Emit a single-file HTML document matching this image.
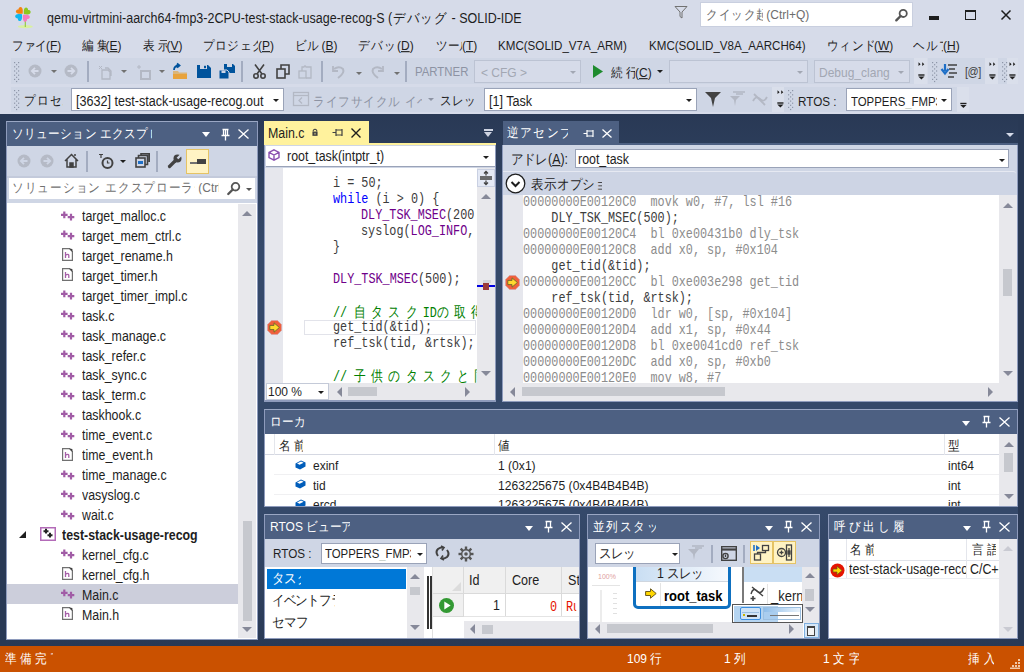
<!DOCTYPE html>
<html><head><meta charset="utf-8">
<style>
*{margin:0;padding:0;box-sizing:border-box}
html,body{width:1024px;height:672px;overflow:hidden}
body{position:relative;background:#293955;font-family:"Liberation Sans",sans-serif;font-size:12px;color:#1e1e1e}
.a{position:absolute}
.t{position:absolute;white-space:nowrap;line-height:1;transform:scaleY(1.12);transform-origin:0 84.65%}
.tw{color:#fff;font-size:12px}
.ts{color:#fff;font-size:12px}
.j{display:inline-block;overflow:hidden;vertical-align:top;white-space:nowrap}
.jc{font-family:"Liberation Sans",sans-serif;letter-spacing:6.75px}
.code{font-family:"Liberation Mono",monospace;font-size:15px;color:#3c3c3c;transform:scaleX(0.7867);transform-origin:0 0}
svg{position:absolute;overflow:visible}
.tri{position:absolute;width:0;height:0;border-left:3px solid transparent;border-right:3px solid transparent;border-top:3px solid #1e1e1e}
.dd{position:absolute;width:0;height:0;border-left:4.5px solid transparent;border-right:4.5px solid transparent;border-top:5px solid #fff}
.sep{position:absolute;width:1.6px;background:#a3acc0}
.combo{position:absolute;background:#fff;border:1px solid #9aa3b8}
.combo.dis{background:#d6dbe9;border-color:#bcc3d3}
.grip{position:absolute;width:6px;background-image:radial-gradient(circle,#a4abbb 0.8px,transparent 1px);background-size:3px 3px}
.ovf{position:absolute;width:8px;height:18px}
.ovf:before{content:"";position:absolute;left:0;top:0;width:0;height:0;border-top:2.5px solid transparent;border-bottom:2.5px solid transparent;border-left:2.5px solid #1e1e1e;box-shadow:none}
.ovf:after{content:"";position:absolute;left:0;top:11px;width:8px;height:2px;background:#1e1e1e}
.ovf2{position:absolute;width:8px;height:2px;background:#1e1e1e}
</style></head><body>
<div class="a" style="left:6px;top:114px;width:1012px;height:532px;background:linear-gradient(180deg,#293955 0%,#35496a 25%,#35496a 75%,#293955 100%)"></div>
<!-- TITLE + MENU + TOOLBARS BACKGROUND -->
<div class="a" style="left:0;top:0;width:1024px;height:114px;background:#d6dbe9"></div>

<!-- title bar -->
<svg style="left:12px;top:4px" width="26" height="28" viewBox="0 0 26 28">
  <ellipse cx="13.3" cy="22.6" rx="7.5" ry="1.7" fill="#d9f0a0"/>
  <rect x="12.7" y="15" width="1.3" height="8" fill="#9ccc50"/>
  <path d="M0 3.8 C-1 2.8 -3.8 0.9 -3.8 -1.2 C-3.8 -3.1 -1.5 -3.8 0 -2.1 C1.5 -3.8 3.8 -3.1 3.8 -1.2 C3.8 0.9 1 2.8 0 3.8Z" fill="#f5820f" transform="translate(8 7) rotate(-45)"/>
  <path d="M0 3.8 C-1 2.8 -3.8 0.9 -3.8 -1.2 C-3.8 -3.1 -1.5 -3.8 0 -2.1 C1.5 -3.8 3.8 -3.1 3.8 -1.2 C3.8 0.9 1 2.8 0 3.8Z" fill="#8cc81e" transform="translate(14.6 7.6) rotate(45)"/>
  <path d="M0 3.8 C-1 2.8 -3.8 0.9 -3.8 -1.2 C-3.8 -3.1 -1.5 -3.8 0 -2.1 C1.5 -3.8 3.8 -3.1 3.8 -1.2 C3.8 0.9 1 2.8 0 3.8Z" fill="#10b8f0" transform="translate(7.3 12.9) rotate(-135)"/>
  <path d="M0 3.8 C-1 2.8 -3.8 0.9 -3.8 -1.2 C-3.8 -3.1 -1.5 -3.8 0 -2.1 C1.5 -3.8 3.8 -3.1 3.8 -1.2 C3.8 0.9 1 2.8 0 3.8Z" fill="#f57ac0" transform="translate(13.7 13.6) rotate(135)"/>
</svg>
<div class="t" style="left:47px;top:13px;font-size:12.5px;color:#1e1e1e">qemu-virtmini-aarch64-fmp3-2CPU-test-stack-usage-recog-S <span class="j" style="width:60.0px;letter-spacing:0.69px">(デバッグ中)</span> - SOLID-IDE</div>
<svg style="left:674px;top:5px" width="14" height="14" viewBox="0 0 14 14"><path d="M1 1.5 H13 L8 7 V13 L6 11.5 V7Z" fill="none" stroke="#717171" stroke-width="1"/></svg>
<div class="a" style="left:700px;top:2px;width:213px;height:25px;background:#fff;border:1px solid #c9cfdf"></div>
<div class="t" style="left:706px;top:9px;font-size:12px;color:#6d6d6d"><span class="j" style="width:57.0px;letter-spacing:0.50px">クイック起動</span> (Ctrl+Q)</div>
<svg style="left:895px;top:8px" width="14" height="14" viewBox="0 0 14 14"><circle cx="8.2" cy="5.4" r="3.6" fill="none" stroke="#555" stroke-width="1.8"/><path d="M5.6 8 L1.3 12.3" stroke="#555" stroke-width="2.4" stroke-linecap="round"/></svg>
<div class="a" style="left:929px;top:16px;width:9.5px;height:3.5px;background:#1e1e1e"></div>
<div class="a" style="left:965px;top:10px;width:10.5px;height:10px;border:1.4px solid #1e1e1e;border-top-width:2.8px"></div>
<svg style="left:1001px;top:9.5px" width="10" height="10" viewBox="0 0 10 10"><path d="M0.5 0.5 L9.5 9.5 M9.5 0.5 L0.5 9.5" stroke="#1e1e1e" stroke-width="1.5"/></svg>

<!-- menu -->
<div class="t" style="left:12px;top:40px"><span class="j" style="width:34.0px;letter-spacing:-0.50px">ファイル</span>(<u>F</u>)</div>
<div class="t" style="left:82px;top:40px"><span class="j" style="width:23.5px;letter-spacing:2.75px">編集</span>(<u>E</u>)</div>
<div class="t" style="left:143px;top:40px"><span class="j" style="width:23.5px;letter-spacing:2.75px">表示</span>(<u>V</u>)</div>
<div class="t" style="left:203px;top:40px"><span class="j" style="width:55.0px;letter-spacing:0.17px">プロジェクト</span>(<u>P</u>)</div>
<div class="t" style="left:295px;top:40px"><span class="j" style="width:26.5px;letter-spacing:-0.17px">ビルド</span>(<u>B</u>)</div>
<div class="t" style="left:358px;top:40px"><span class="j" style="width:39.0px;letter-spacing:0.75px">デバッグ</span>(<u>D</u>)</div>
<div class="t" style="left:436px;top:40px"><span class="j" style="width:26.0px;letter-spacing:-0.33px">ツール</span>(<u>T</u>)</div>
<div class="t" style="left:498px;top:40px;font-size:11.6px">KMC(SOLID_V7A_ARM)</div>
<div class="t" style="left:649px;top:40px;font-size:11.6px">KMC(SOLID_V8A_AARCH64)</div>
<div class="t" style="left:827px;top:40px"><span class="j" style="width:47.0px;letter-spacing:0.40px">ウィンドウ</span>(<u>W</u>)</div>
<div class="t" style="left:913px;top:40px"><span class="j" style="width:30.0px;letter-spacing:1.00px">ヘルプ</span>(<u>H</u>)</div>

<!-- TOOLBAR ROW 1 -->
<div class="a" style="left:11px;top:58px;width:903px;height:26px;background:#cfd6e5"></div>
<div class="a" style="left:914px;top:58px;width:13px;height:26px;background:#dadfeb"></div>
<div class="a" style="left:928px;top:58px;width:57px;height:26px;background:#cfd6e5"></div>
<div class="a" style="left:985px;top:58px;width:13px;height:26px;background:#dadfeb"></div>
<div class="a" style="left:998px;top:58px;width:9px;height:26px;background:#cfd6e5"></div>
<div class="a" style="left:1007px;top:58px;width:11px;height:26px;background:#dadfeb"></div>
<svg style="left:13px;top:62px" width="7" height="19" viewBox="0 0 7 19" fill="#8e96a8"><rect x="1" y="0" width="1.2" height="1.2"/><rect x="5" y="0" width="1.2" height="1.2"/><rect x="3" y="2.1" width="1.2" height="1.2"/><rect x="1" y="4.2" width="1.2" height="1.2"/><rect x="5" y="4.2" width="1.2" height="1.2"/><rect x="3" y="6.300000000000001" width="1.2" height="1.2"/><rect x="1" y="8.4" width="1.2" height="1.2"/><rect x="5" y="8.4" width="1.2" height="1.2"/><rect x="3" y="10.5" width="1.2" height="1.2"/><rect x="1" y="12.6" width="1.2" height="1.2"/><rect x="5" y="12.6" width="1.2" height="1.2"/><rect x="3" y="14.7" width="1.2" height="1.2"/><rect x="1" y="16.8" width="1.2" height="1.2"/><rect x="5" y="16.8" width="1.2" height="1.2"/><rect x="3" y="18.900000000000002" width="1.2" height="1.2"/></svg>
<svg style="left:28px;top:64px" width="14" height="14" viewBox="0 0 14 14"><circle cx="7" cy="7" r="6.5" fill="#b5bac6"/><path d="M3.5 7 H10.5 M7 3.8 L3.8 7 L7 10.2" stroke="#d6dbe9" stroke-width="1.8" fill="none"/></svg>
<div class="tri" style="left:51px;top:70px;border-top-color:#717171"></div>
<svg style="left:64px;top:64px" width="14" height="14" viewBox="0 0 14 14"><circle cx="7" cy="7" r="6.5" fill="#b5bac6"/><path d="M3.5 7 H10.5 M7 3.8 L10.2 7 L7 10.2" stroke="#d6dbe9" stroke-width="1.8" fill="none"/></svg>
<div class="sep" style="left:87px;top:61px;height:21px"></div>
<svg style="left:98px;top:65px" width="15" height="15" viewBox="0 0 15 15" fill="none" stroke="#b3b8c4" stroke-width="1.3"><path d="M4 5 V14 H12 V7 L10 5Z M7 3 H10 L13 6 V11"/><path d="M1 1 L4 4 M4 1 L1 4" stroke-width="1"/></svg>
<div class="tri" style="left:121px;top:70px;border-top-color:#717171"></div>
<svg style="left:136px;top:65px" width="16" height="15" viewBox="0 0 16 15" fill="none" stroke="#b3b8c4" stroke-width="2"><rect x="5" y="6" width="9" height="8"/><path d="M1 2 H5 M3 0 V4" stroke-width="1"/></svg>
<div class="tri" style="left:159px;top:70px;border-top-color:#717171"></div>
<svg style="left:172px;top:63px" width="16" height="17" viewBox="0 0 16 17"><path d="M1 8 H6 L7 9.5 H15 V16 H1Z" fill="#dcb67a"/><path d="M1 11 H15 V16 H1Z" fill="#e8a33d"/><path d="M2 7 Q2 2.5 7 2.5 M5 0.5 L7.5 2.5 L5 4.5" stroke="#00539c" stroke-width="1.8" fill="none"/></svg>
<svg style="left:197px;top:65px" width="14" height="13" viewBox="0 0 14 13"><path d="M0 0 H11 L14 3 V13 H0Z" fill="#00539c"/><rect x="3" y="0" width="7" height="4" fill="#cfd6e5"/><rect x="7" y="0.8" width="2" height="2.4" fill="#00539c"/></svg>
<svg style="left:219px;top:64px" width="16" height="15" viewBox="0 0 16 15"><path d="M5 0 H14 L16 2 V9 H5Z" fill="#00539c"/><rect x="8" y="0" width="5" height="3" fill="#cfd6e5"/><path d="M0 6 H8 L10 8 V15 H0Z" fill="#00539c" stroke="#cfd6e5" stroke-width="1"/><rect x="2.5" y="6.5" width="4" height="2.5" fill="#cfd6e5"/></svg>
<div class="sep" style="left:241px;top:61px;height:21px"></div>
<svg style="left:253px;top:64px" width="13" height="15" viewBox="0 0 13 15" fill="none" stroke="#424242" stroke-width="1.6"><path d="M2 0.5 L9 10 M11 0.5 L4 10"/><circle cx="3" cy="12" r="2.2"/><circle cx="10" cy="12" r="2.2"/></svg>
<svg style="left:276px;top:64px" width="14" height="15" viewBox="0 0 14 15" fill="none" stroke="#424242" stroke-width="1.6"><rect x="1" y="5" width="8" height="9"/><path d="M5 5 V1 H13 V10 H9"/></svg>
<svg style="left:298px;top:64px" width="14" height="15" viewBox="0 0 14 15" fill="none" stroke="#b3b8c4" stroke-width="1.3"><rect x="1" y="7" width="7" height="7"/><path d="M4 7 V3 H6 Q7 0.8 8 3 H10 L13 3 V14 H8"/></svg>
<div class="sep" style="left:321px;top:61px;height:21px"></div>
<svg style="left:332px;top:65px" width="14" height="14" viewBox="0 0 14 14" fill="none" stroke="#b3b8c4" stroke-width="2"><path d="M2 4 Q7 0.5 11 4 Q13 8 6 13"/><path d="M1 1 V6 H6" stroke-width="1.8"/></svg>
<div class="tri" style="left:356px;top:72px;border-top-color:#717171"></div>
<svg style="left:370px;top:65px" width="14" height="14" viewBox="0 0 14 14" fill="none" stroke="#b3b8c4" stroke-width="2"><path d="M12 4 Q7 0.5 3 4 Q1 8 8 13"/><path d="M13 1 V6 H8" stroke-width="1.8"/></svg>
<div class="tri" style="left:394px;top:72px;border-top-color:#717171"></div>
<div class="sep" style="left:405px;top:61px;height:21px"></div>
<div class="t" style="left:415px;top:67px;color:#8d93a3;font-size:11.4px">PARTNER</div>
<div class="combo dis" style="left:474px;top:60px;width:107px;height:23px"></div>
<div class="t" style="left:481px;top:67px;color:#a2a7b3">&lt; CFG &gt;</div>
<div class="tri" style="left:570px;top:71px;border-top-color:#a2a7b3"></div>
<svg style="left:593px;top:65px" width="10" height="13" viewBox="0 0 10 13"><path d="M0 0 L10 6.5 L0 13Z" fill="#1e8b2e"/></svg>
<div class="t" style="left:611px;top:67px"><span class="j" style="width:24.0px;letter-spacing:3.00px">続行</span>(<u>C</u>)</div>
<div class="tri" style="left:657px;top:70px;border-top-color:#1e1e1e"></div>
<div class="combo dis" style="left:669px;top:60px;width:139px;height:23px"></div>
<div class="tri" style="left:797px;top:71px;border-top-color:#a2a7b3"></div>
<div class="combo dis" style="left:814px;top:60px;width:96px;height:23px"></div>
<div class="t" style="left:819px;top:67px;color:#a2a7b3">Debug_clang</div>
<div class="tri" style="left:898px;top:71px;border-top-color:#a2a7b3"></div>
<svg style="left:918px;top:62px" width="8" height="18" viewBox="0 0 8 18"><path d="M0.5 0.3 L2.6 2.2 L0.5 4.1Z M4.2 0.3 L6.3 2.2 L4.2 4.1Z" fill="#1e1e1e"/><rect x="0.3" y="12.3" width="6.2" height="1.4" fill="#1e1e1e"/><path d="M0.3 14.6 H6.5 L3.4 17.6Z" fill="#1e1e1e"/></svg>
<svg style="left:931px;top:62px" width="7" height="19" viewBox="0 0 7 19" fill="#8e96a8"><rect x="1" y="0" width="1.2" height="1.2"/><rect x="5" y="0" width="1.2" height="1.2"/><rect x="3" y="2.1" width="1.2" height="1.2"/><rect x="1" y="4.2" width="1.2" height="1.2"/><rect x="5" y="4.2" width="1.2" height="1.2"/><rect x="3" y="6.300000000000001" width="1.2" height="1.2"/><rect x="1" y="8.4" width="1.2" height="1.2"/><rect x="5" y="8.4" width="1.2" height="1.2"/><rect x="3" y="10.5" width="1.2" height="1.2"/><rect x="1" y="12.6" width="1.2" height="1.2"/><rect x="5" y="12.6" width="1.2" height="1.2"/><rect x="3" y="14.7" width="1.2" height="1.2"/><rect x="1" y="16.8" width="1.2" height="1.2"/><rect x="5" y="16.8" width="1.2" height="1.2"/><rect x="3" y="18.900000000000002" width="1.2" height="1.2"/></svg>
<svg style="left:941px;top:64px" width="17" height="14" viewBox="0 0 17 14"><path d="M7 1 H16 M8 5 H14 M8 9 H16 M7 13 H13" stroke="#424242" stroke-width="1.6"/><path d="M4 0 V7 M0.5 5 L4 9.5 L7.5 5" stroke="#1e6fc7" stroke-width="2.2" fill="none"/></svg>
<div class="t" style="left:965px;top:67px;font-size:11px;color:#424242;letter-spacing:-0.5px">[@]</div>
<svg style="left:989px;top:62px" width="8" height="18" viewBox="0 0 8 18"><path d="M0.5 0.3 L2.6 2.2 L0.5 4.1Z M4.2 0.3 L6.3 2.2 L4.2 4.1Z" fill="#1e1e1e"/><rect x="0.3" y="12.3" width="6.2" height="1.4" fill="#1e1e1e"/><path d="M0.3 14.6 H6.5 L3.4 17.6Z" fill="#1e1e1e"/></svg>
<svg style="left:1001px;top:62px" width="7" height="19" viewBox="0 0 7 19" fill="#8e96a8"><rect x="1" y="0" width="1.2" height="1.2"/><rect x="5" y="0" width="1.2" height="1.2"/><rect x="3" y="2.1" width="1.2" height="1.2"/><rect x="1" y="4.2" width="1.2" height="1.2"/><rect x="5" y="4.2" width="1.2" height="1.2"/><rect x="3" y="6.300000000000001" width="1.2" height="1.2"/><rect x="1" y="8.4" width="1.2" height="1.2"/><rect x="5" y="8.4" width="1.2" height="1.2"/><rect x="3" y="10.5" width="1.2" height="1.2"/><rect x="1" y="12.6" width="1.2" height="1.2"/><rect x="5" y="12.6" width="1.2" height="1.2"/><rect x="3" y="14.7" width="1.2" height="1.2"/><rect x="1" y="16.8" width="1.2" height="1.2"/><rect x="5" y="16.8" width="1.2" height="1.2"/><rect x="3" y="18.900000000000002" width="1.2" height="1.2"/></svg>
<svg style="left:1009px;top:62px" width="8" height="18" viewBox="0 0 8 18"><path d="M0.5 0.3 L2.6 2.2 L0.5 4.1Z M4.2 0.3 L6.3 2.2 L4.2 4.1Z" fill="#1e1e1e"/><rect x="0.3" y="12.3" width="6.2" height="1.4" fill="#1e1e1e"/><path d="M0.3 14.6 H6.5 L3.4 17.6Z" fill="#1e1e1e"/></svg>

<!-- TOOLBAR ROW 2 -->
<div class="a" style="left:11px;top:87px;width:761px;height:25px;background:#cfd6e5"></div>
<div class="a" style="left:772px;top:87px;width:12px;height:25px;background:#dadfeb"></div>
<div class="a" style="left:784px;top:87px;width:173px;height:25px;background:#cfd6e5"></div>
<div class="a" style="left:957px;top:87px;width:12px;height:25px;background:#dadfeb"></div>
<svg style="left:13px;top:90px" width="7" height="19" viewBox="0 0 7 19" fill="#8e96a8"><rect x="1" y="0" width="1.2" height="1.2"/><rect x="5" y="0" width="1.2" height="1.2"/><rect x="3" y="2.1" width="1.2" height="1.2"/><rect x="1" y="4.2" width="1.2" height="1.2"/><rect x="5" y="4.2" width="1.2" height="1.2"/><rect x="3" y="6.300000000000001" width="1.2" height="1.2"/><rect x="1" y="8.4" width="1.2" height="1.2"/><rect x="5" y="8.4" width="1.2" height="1.2"/><rect x="3" y="10.5" width="1.2" height="1.2"/><rect x="1" y="12.6" width="1.2" height="1.2"/><rect x="5" y="12.6" width="1.2" height="1.2"/><rect x="3" y="14.7" width="1.2" height="1.2"/><rect x="1" y="16.8" width="1.2" height="1.2"/><rect x="5" y="16.8" width="1.2" height="1.2"/><rect x="3" y="18.900000000000002" width="1.2" height="1.2"/></svg>
<div class="t" style="left:24px;top:95px"><span class="j" style="width:39.0px;letter-spacing:0.75px">プロセス</span></div>
<div class="combo" style="left:71px;top:88px;width:213px;height:23px"></div>
<div class="t" style="left:76px;top:96px;font-size:12.6px">[3632] test-stack-usage-recog.out</div>
<div class="tri" style="left:273px;top:99px;border-top-color:#1e1e1e"></div>
<svg style="left:293px;top:92px" width="16" height="14" viewBox="0 0 16 14" fill="none" stroke="#b3b8c4" stroke-width="1.3"><rect x="0.5" y="0.5" width="15" height="13"/><path d="M0.5 3.5 H15.5"/><path d="M9 5.5 L6 8.5 L9 11.5" /></svg>
<div class="t" style="left:313px;top:96px;color:#8d93a3"><span class="j" style="width:109.0px;letter-spacing:0.56px">ライフサイクル イベント</span></div>
<div class="tri" style="left:428px;top:98px;border-top-color:#8d93a3"></div>
<div class="t" style="left:440px;top:95px"><span class="j" style="width:36.0px;letter-spacing:0.00px">スレッド</span></div>
<div class="combo" style="left:484px;top:88px;width:213px;height:23px"></div>
<div class="t" style="left:489px;top:96px;font-size:12.6px">[1] Task</div>
<div class="tri" style="left:686px;top:99px;border-top-color:#1e1e1e"></div>
<svg style="left:705px;top:92px" width="16" height="15" viewBox="0 0 16 15"><path d="M0 0 H16 L10 6 L8 15 L6 6Z" fill="#424242"/><path d="M2 1 H14 L9 5" fill="#424242"/></svg>
<svg style="left:728px;top:92px" width="17" height="15" viewBox="0 0 17 15" fill="#b3b8c4"><path d="M2 4 H12 L8 8 L7 14 L6 8Z"/><path d="M5 0 H17 M8 2 H15" stroke="#b3b8c4" stroke-width="1.3"/></svg>
<svg style="left:752px;top:93px" width="16" height="13" viewBox="0 0 16 13" fill="none" stroke="#b3b8c4" stroke-width="1.8"><path d="M1 8 Q4 2 8 6 Q12 10 15 4"/><path d="M2 1 L13 12"/></svg>
<svg style="left:777px;top:90px" width="8" height="18" viewBox="0 0 8 18"><path d="M0.5 0.3 L2.6 2.2 L0.5 4.1Z M4.2 0.3 L6.3 2.2 L4.2 4.1Z" fill="#1e1e1e"/><rect x="0.3" y="12.3" width="6.2" height="1.4" fill="#1e1e1e"/><path d="M0.3 14.6 H6.5 L3.4 17.6Z" fill="#1e1e1e"/></svg>
<svg style="left:787px;top:90px" width="7" height="19" viewBox="0 0 7 19" fill="#8e96a8"><rect x="1" y="0" width="1.2" height="1.2"/><rect x="5" y="0" width="1.2" height="1.2"/><rect x="3" y="2.1" width="1.2" height="1.2"/><rect x="1" y="4.2" width="1.2" height="1.2"/><rect x="5" y="4.2" width="1.2" height="1.2"/><rect x="3" y="6.300000000000001" width="1.2" height="1.2"/><rect x="1" y="8.4" width="1.2" height="1.2"/><rect x="5" y="8.4" width="1.2" height="1.2"/><rect x="3" y="10.5" width="1.2" height="1.2"/><rect x="1" y="12.6" width="1.2" height="1.2"/><rect x="5" y="12.6" width="1.2" height="1.2"/><rect x="3" y="14.7" width="1.2" height="1.2"/><rect x="1" y="16.8" width="1.2" height="1.2"/><rect x="5" y="16.8" width="1.2" height="1.2"/><rect x="3" y="18.900000000000002" width="1.2" height="1.2"/></svg>
<div class="t" style="left:798px;top:96px;font-size:11.7px">RTOS :</div>
<div class="combo" style="left:846px;top:88px;width:106px;height:23px"></div>
<div class="t" style="left:851px;top:96.5px;font-size:11.4px;width:85.5px;overflow:hidden">TOPPERS_FMP3</div>
<div class="tri" style="left:941px;top:99px;border-top-color:#1e1e1e"></div>
<svg style="left:960px;top:90px" width="8" height="18" viewBox="0 0 8 18"><rect x="0.3" y="12.8" width="6.2" height="1.4" fill="#1e1e1e"/><path d="M0.3 15.1 H6.5 L3.4 18.1Z" fill="#1e1e1e"/></svg>

<!-- ========== SOLUTION EXPLORER ========== -->
<div class="a" style="left:6px;top:121px;width:252px;height:519px;background:#fff;border:1px solid #8e9bbc;border-top-color:#9aa7c4"></div>
<div class="a" style="left:7px;top:122px;width:250px;height:24px;background:#4d6082"></div>
<div class="t tw" style="left:12px;top:128px"><span class="j" style="width:140.0px;letter-spacing:0.10px">ソリューション エクスプローラー</span></div>
<div class="dd" style="left:202px;top:132px"></div>
<svg class="pin" style="left:221px;top:129px" width="9" height="12" viewBox="0 0 9 12"><path d="M1.5 0.5 H7.5 M2.5 0.5 V6.5 M6.5 0.5 V6.5 M0.5 6.5 H8.5 M4.5 6.5 V11.5 M4.5 0.5 V6.5" stroke="#fff" stroke-width="1.3" fill="none"/></svg>
<svg style="left:238px;top:129px" width="11" height="10" viewBox="0 0 11 10"><path d="M0.5 0.5 L10.5 9.5 M10.5 0.5 L0.5 9.5" stroke="#fff" stroke-width="1.3"/></svg>
<div class="a" style="left:7px;top:146px;width:250px;height:31px;background:#cfd6e5"></div>
<svg style="left:17px;top:154px" width="14" height="14" viewBox="0 0 14 14"><circle cx="7" cy="7" r="6.5" fill="#b5bac6"/><path d="M3.5 7 H10.5 M7 3.8 L3.8 7 L7 10.2" stroke="#cfd6e5" stroke-width="1.8" fill="none"/></svg>
<svg style="left:40px;top:154px" width="14" height="14" viewBox="0 0 14 14"><circle cx="7" cy="7" r="6.5" fill="#b5bac6"/><path d="M3.5 7 H10.5 M7 3.8 L10.2 7 L7 10.2" stroke="#cfd6e5" stroke-width="1.8" fill="none"/></svg>
<svg style="left:64px;top:153px" width="15" height="15" viewBox="0 0 15 15" fill="none" stroke="#424242" stroke-width="1.5"><path d="M1 8 L7.5 1.5 L14 8 M3 6.5 V14 H12 V6.5 M11 3 V1"/><rect x="6" y="10" width="3" height="4" fill="#424242"/></svg>
<div class="sep" style="left:86px;top:151px;height:21px"></div>
<svg style="left:99px;top:154px" width="15" height="15" viewBox="0 0 15 15" fill="none" stroke="#424242"><circle cx="8.5" cy="9" r="5" stroke-width="2"/><path d="M8.5 6.5 V9 H10.5" stroke-width="1.2"/><path d="M0 0.5 H4 M2 0.5 V4" stroke-width="1.2"/></svg>
<div class="tri" style="left:120px;top:160px;border-top-color:#1e1e1e"></div>
<svg style="left:135px;top:153px" width="15" height="15" viewBox="0 0 15 15" fill="none" stroke="#424242" stroke-width="1.6"><rect x="1" y="5" width="9" height="9"/><path d="M3.5 5 V2.5 H12.5 V11.5 H10 M6 2.5 V0.8 H14.2 V9"/><rect x="3" y="8" width="5" height="3" fill="#1e6fc7" stroke="none"/></svg>
<div class="sep" style="left:156px;top:151px;height:21px"></div>
<svg style="left:168px;top:154px" width="14" height="14" viewBox="0 0 14 14"><path d="M1.5 12.5 L7 7" stroke="#424242" stroke-width="3.2" stroke-linecap="round"/><circle cx="9.5" cy="4.5" r="4" fill="#424242"/><path d="M9.5 4.5 L13 1" stroke="#cfd6e5" stroke-width="2.4"/></svg>
<div class="a" style="left:186px;top:149px;width:23px;height:25px;background:#fff3c4;border:1px solid #e5c365"></div>
<div class="a" style="left:190px;top:162px;width:8px;height:2px;background:#717171"></div>
<div class="a" style="left:197px;top:159px;width:9px;height:5px;background:#424242"></div>
<div class="a" style="left:7px;top:176px;width:250px;height:27px;background:#cfd6e5"></div>
<div class="a" style="left:7px;top:176px;width:250px;height:2px;background:#c3cadb"></div>
<div class="a" style="left:9px;top:178px;width:246px;height:21px;background:#fff"></div>
<div class="t" style="left:12px;top:182px;color:#717171;width:207px;overflow:hidden"><span class="j" style="width:183.0px;letter-spacing:0.72px">ソリューション エクスプローラー の検索</span> (Ctrl+;)</div>
<svg style="left:227px;top:182px" width="14" height="14" viewBox="0 0 14 14"><circle cx="8.5" cy="4.7" r="3.8" fill="none" stroke="#555" stroke-width="1.8"/><path d="M5.8 7.5 L1.3 12" stroke="#555" stroke-width="2.4" stroke-linecap="round"/></svg>
<div class="tri" style="left:246px;top:187.5px;border-top-color:#555"></div>
<svg style="left:61px;top:210.5px" width="14" height="10" viewBox="0 0 14 10"><path d="M0 3.9 H6.6 M3.3 0.6 V7.2 M6.7 6.1 H13.3 M10 2.8 V9.4" stroke="#a15ca6" stroke-width="2.2"/></svg>
<div class="t" style="left:82px;top:211.0px;font-size:12.4px">target_malloc.c</div>
<svg style="left:61px;top:230.4px" width="14" height="10" viewBox="0 0 14 10"><path d="M0 3.9 H6.6 M3.3 0.6 V7.2 M6.7 6.1 H13.3 M10 2.8 V9.4" stroke="#a15ca6" stroke-width="2.2"/></svg>
<div class="t" style="left:82px;top:230.9px;font-size:12.4px">target_mem_ctrl.c</div>
<svg style="left:62px;top:248.4px" width="11" height="13" viewBox="0 0 11 13"><path d="M0.6 0.6 H7.5 L10.4 3.5 V12.4 H0.6Z" fill="#fff" stroke="#717171" stroke-width="1.2"/><path d="M7 0.6 L10.4 4 V1 Z" fill="#424242"/><path d="M3.5 4 V10 M3.5 7.2 Q6.8 5.5 6.8 7.5 V10" stroke="#a65fa8" stroke-width="1.3" fill="none"/></svg>
<div class="t" style="left:82px;top:250.9px;font-size:12.4px">target_rename.h</div>
<svg style="left:62px;top:268.3px" width="11" height="13" viewBox="0 0 11 13"><path d="M0.6 0.6 H7.5 L10.4 3.5 V12.4 H0.6Z" fill="#fff" stroke="#717171" stroke-width="1.2"/><path d="M7 0.6 L10.4 4 V1 Z" fill="#424242"/><path d="M3.5 4 V10 M3.5 7.2 Q6.8 5.5 6.8 7.5 V10" stroke="#a65fa8" stroke-width="1.3" fill="none"/></svg>
<div class="t" style="left:82px;top:270.8px;font-size:12.4px">target_timer.h</div>
<svg style="left:61px;top:290.2px" width="14" height="10" viewBox="0 0 14 10"><path d="M0 3.9 H6.6 M3.3 0.6 V7.2 M6.7 6.1 H13.3 M10 2.8 V9.4" stroke="#a15ca6" stroke-width="2.2"/></svg>
<div class="t" style="left:82px;top:290.7px;font-size:12.4px">target_timer_impl.c</div>
<svg style="left:61px;top:310.1px" width="14" height="10" viewBox="0 0 14 10"><path d="M0 3.9 H6.6 M3.3 0.6 V7.2 M6.7 6.1 H13.3 M10 2.8 V9.4" stroke="#a15ca6" stroke-width="2.2"/></svg>
<div class="t" style="left:82px;top:310.6px;font-size:12.4px">task.c</div>
<svg style="left:61px;top:330.1px" width="14" height="10" viewBox="0 0 14 10"><path d="M0 3.9 H6.6 M3.3 0.6 V7.2 M6.7 6.1 H13.3 M10 2.8 V9.4" stroke="#a15ca6" stroke-width="2.2"/></svg>
<div class="t" style="left:82px;top:330.6px;font-size:12.4px">task_manage.c</div>
<svg style="left:61px;top:350.0px" width="14" height="10" viewBox="0 0 14 10"><path d="M0 3.9 H6.6 M3.3 0.6 V7.2 M6.7 6.1 H13.3 M10 2.8 V9.4" stroke="#a15ca6" stroke-width="2.2"/></svg>
<div class="t" style="left:82px;top:350.5px;font-size:12.4px">task_refer.c</div>
<svg style="left:61px;top:369.9px" width="14" height="10" viewBox="0 0 14 10"><path d="M0 3.9 H6.6 M3.3 0.6 V7.2 M6.7 6.1 H13.3 M10 2.8 V9.4" stroke="#a15ca6" stroke-width="2.2"/></svg>
<div class="t" style="left:82px;top:370.4px;font-size:12.4px">task_sync.c</div>
<svg style="left:61px;top:389.9px" width="14" height="10" viewBox="0 0 14 10"><path d="M0 3.9 H6.6 M3.3 0.6 V7.2 M6.7 6.1 H13.3 M10 2.8 V9.4" stroke="#a15ca6" stroke-width="2.2"/></svg>
<div class="t" style="left:82px;top:390.4px;font-size:12.4px">task_term.c</div>
<svg style="left:61px;top:409.8px" width="14" height="10" viewBox="0 0 14 10"><path d="M0 3.9 H6.6 M3.3 0.6 V7.2 M6.7 6.1 H13.3 M10 2.8 V9.4" stroke="#a15ca6" stroke-width="2.2"/></svg>
<div class="t" style="left:82px;top:410.3px;font-size:12.4px">taskhook.c</div>
<svg style="left:61px;top:429.7px" width="14" height="10" viewBox="0 0 14 10"><path d="M0 3.9 H6.6 M3.3 0.6 V7.2 M6.7 6.1 H13.3 M10 2.8 V9.4" stroke="#a15ca6" stroke-width="2.2"/></svg>
<div class="t" style="left:82px;top:430.2px;font-size:12.4px">time_event.c</div>
<svg style="left:62px;top:447.7px" width="11" height="13" viewBox="0 0 11 13"><path d="M0.6 0.6 H7.5 L10.4 3.5 V12.4 H0.6Z" fill="#fff" stroke="#717171" stroke-width="1.2"/><path d="M7 0.6 L10.4 4 V1 Z" fill="#424242"/><path d="M3.5 4 V10 M3.5 7.2 Q6.8 5.5 6.8 7.5 V10" stroke="#a65fa8" stroke-width="1.3" fill="none"/></svg>
<div class="t" style="left:82px;top:450.2px;font-size:12.4px">time_event.h</div>
<svg style="left:61px;top:469.6px" width="14" height="10" viewBox="0 0 14 10"><path d="M0 3.9 H6.6 M3.3 0.6 V7.2 M6.7 6.1 H13.3 M10 2.8 V9.4" stroke="#a15ca6" stroke-width="2.2"/></svg>
<div class="t" style="left:82px;top:470.1px;font-size:12.4px">time_manage.c</div>
<svg style="left:61px;top:489.5px" width="14" height="10" viewBox="0 0 14 10"><path d="M0 3.9 H6.6 M3.3 0.6 V7.2 M6.7 6.1 H13.3 M10 2.8 V9.4" stroke="#a15ca6" stroke-width="2.2"/></svg>
<div class="t" style="left:82px;top:490.0px;font-size:12.4px">vasyslog.c</div>
<svg style="left:61px;top:509.5px" width="14" height="10" viewBox="0 0 14 10"><path d="M0 3.9 H6.6 M3.3 0.6 V7.2 M6.7 6.1 H13.3 M10 2.8 V9.4" stroke="#a15ca6" stroke-width="2.2"/></svg>
<div class="t" style="left:82px;top:510.0px;font-size:12.4px">wait.c</div>
<div class="a" style="left:19px;top:531.4px;width:0;height:0;border-left:7px solid transparent;border-bottom:7px solid #1e1e1e"></div>
<svg style="left:40px;top:526.9px" width="16" height="14" viewBox="0 0 16 14"><rect x="0.75" y="0.75" width="14.5" height="12.5" fill="#fff" stroke="#b36bb8" stroke-width="1.5"/><path d="M3.5 4.2 H8.5 M6 1.8 V6.6 M7.5 8.2 H12.5 M10 5.8 V10.6" stroke="#222" stroke-width="2"/></svg>
<div class="t" style="left:62px;top:529.9px;font-size:12.4px;font-weight:bold">test-stack-usage-recog</div>
<svg style="left:61px;top:549.3px" width="14" height="10" viewBox="0 0 14 10"><path d="M0 3.9 H6.6 M3.3 0.6 V7.2 M6.7 6.1 H13.3 M10 2.8 V9.4" stroke="#a15ca6" stroke-width="2.2"/></svg>
<div class="t" style="left:82px;top:549.8px;font-size:12.4px">kernel_cfg.c</div>
<svg style="left:62px;top:567.2px" width="11" height="13" viewBox="0 0 11 13"><path d="M0.6 0.6 H7.5 L10.4 3.5 V12.4 H0.6Z" fill="#fff" stroke="#717171" stroke-width="1.2"/><path d="M7 0.6 L10.4 4 V1 Z" fill="#424242"/><path d="M3.5 4 V10 M3.5 7.2 Q6.8 5.5 6.8 7.5 V10" stroke="#a65fa8" stroke-width="1.3" fill="none"/></svg>
<div class="t" style="left:82px;top:569.7px;font-size:12.4px">kernel_cfg.h</div>
<div class="a" style="left:7px;top:583.5px;width:231px;height:20.5px;background:#ccceDB"></div>
<svg style="left:61px;top:589.2px" width="14" height="10" viewBox="0 0 14 10"><path d="M0 3.9 H6.6 M3.3 0.6 V7.2 M6.7 6.1 H13.3 M10 2.8 V9.4" stroke="#a15ca6" stroke-width="2.2"/></svg>
<div class="t" style="left:82px;top:589.7px;font-size:12.4px">Main.c</div>
<svg style="left:62px;top:607.1px" width="11" height="13" viewBox="0 0 11 13"><path d="M0.6 0.6 H7.5 L10.4 3.5 V12.4 H0.6Z" fill="#fff" stroke="#717171" stroke-width="1.2"/><path d="M7 0.6 L10.4 4 V1 Z" fill="#424242"/><path d="M3.5 4 V10 M3.5 7.2 Q6.8 5.5 6.8 7.5 V10" stroke="#a65fa8" stroke-width="1.3" fill="none"/></svg>
<div class="t" style="left:82px;top:609.6px;font-size:12.4px">Main.h</div>
<div class="a" style="left:238px;top:204px;width:18px;height:434px;background:#e8e8ec"></div>
<div class="a" style="left:242px;top:211px;width:0;height:0;border-left:5px solid transparent;border-right:5px solid transparent;border-bottom:5px solid #868999"></div>
<div class="a" style="left:243px;top:521px;width:9px;height:100px;background:#c6c8ce"></div>
<div class="a" style="left:242px;top:627px;width:0;height:0;border-left:5px solid transparent;border-right:5px solid transparent;border-top:5px solid #868999"></div>
<!-- ========== EDITOR ========== -->
<div class="a" style="left:264px;top:121px;width:105px;height:24px;background:#fff29d"></div>
<div class="a" style="left:264px;top:143px;width:232px;height:2px;background:#fff29d"></div>
<div class="t" style="left:268px;top:128px;font-size:12.4px">Main.c</div>
<svg style="left:311.5px;top:128px" width="6" height="8" viewBox="0 0 7 9"><path d="M1.5 4 V2.5 Q3.5 0 5.5 2.5 V4" stroke="#424242" stroke-width="1.2" fill="none"/><rect x="0.5" y="4" width="6" height="5" fill="#424242"/><rect x="3" y="5.5" width="1" height="2" fill="#fff29d"/></svg>
<svg style="left:332px;top:128px" width="11" height="9" viewBox="0 0 11 9" fill="none" stroke="#424242" stroke-width="1.2"><path d="M0.5 4.5 H4 M4 1 V8 M4 2 H10 M4 7 H10 M10 1 V8"/></svg>
<svg style="left:351px;top:128px" width="10" height="10" viewBox="0 0 10 10"><path d="M0.5 0.5 L9.5 9.5 M9.5 0.5 L0.5 9.5" stroke="#1e1e1e" stroke-width="1.4"/></svg>
<div class="a" style="left:484px;top:129px;width:9px;height:2px;background:#ced4e2"></div>
<div class="a" style="left:484px;top:132px;width:0;height:0;border-left:4.5px solid transparent;border-right:4.5px solid transparent;border-top:5px solid #ced4e2"></div>
<div class="a" style="left:264px;top:145px;width:232px;height:257px;background:#cfd6e5;border-left:1px solid #8e9bbc;border-right:1px solid #8e9bbc;border-bottom:2px solid #8e9bbc"></div>
<div class="a" style="left:266px;top:146px;width:229px;height:21px;background:#fff;border-bottom:1px solid #9aa3b8"></div>
<svg style="left:268px;top:149px" width="12" height="12" viewBox="0 0 12 12" fill="none" stroke="#8a4fb0" stroke-width="1.4"><path d="M6 0.8 L11 3.4 V8.6 L6 11.2 L1 8.6 V3.4Z M1 3.4 L6 6 L11 3.4 M6 6 V11.2"/></svg>
<div class="t" style="left:287px;top:151px;font-size:12.4px">root_task(intptr_t)</div>
<div class="tri" style="left:483px;top:156px;border-top-color:#1e1e1e"></div>
<div class="a" style="left:265px;top:168px;width:18px;height:215px;background:#e6e7ed"></div>
<div class="a" style="left:283px;top:168px;width:194px;height:215px;background:#fff;overflow:hidden" id="code"></div>
<div class="a" style="left:304px;top:320px;width:172px;height:15px;border:1px solid #e2e3ea"></div>
<div class="a" style="left:333px;top:175.5px;width:144px;height:16px;overflow:hidden"><div class="t code" style="left:0;top:0">i = 50;</div></div>
<div class="a" style="left:333px;top:191.5px;width:144px;height:16px;overflow:hidden"><div class="t code" style="left:0;top:0"><span style="color:#0000ff">while</span> (i &gt; 0) {</div></div>
<div class="a" style="left:361px;top:207.5px;width:116px;height:16px;overflow:hidden"><div class="t code" style="left:0;top:0"><span style="color:#6f008a">DLY_TSK_MSEC</span>(200</div></div>
<div class="a" style="left:361px;top:223.5px;width:116px;height:16px;overflow:hidden"><div class="t code" style="left:0;top:0">syslog(<span style="color:#6f008a">LOG_INFO</span>,</div></div>
<div class="a" style="left:333px;top:239.5px;width:144px;height:16px;overflow:hidden"><div class="t code" style="left:0;top:0">}</div></div>
<div class="a" style="left:333px;top:271.5px;width:144px;height:16px;overflow:hidden"><div class="t code" style="left:0;top:0"><span style="color:#6f008a">DLY_TSK_MSEC</span>(500);</div></div>
<div class="a" style="left:333px;top:303.5px;width:144px;height:16px;overflow:hidden"><div class="t code" style="left:0;top:0"><span style="color:#008000">// <span class="jc">自タスク</span>ID<span class="jc">の取得と</span></span></div></div>
<div class="a" style="left:333px;top:319.5px;width:144px;height:16px;overflow:hidden"><div class="t code" style="left:0;top:0">get_tid(&amp;tid);</div></div>
<div class="a" style="left:333px;top:335.5px;width:144px;height:16px;overflow:hidden"><div class="t code" style="left:0;top:0">ref_tsk(tid, &amp;rtsk);</div></div>
<div class="a" style="left:333px;top:367.5px;width:144px;height:16px;overflow:hidden"><div class="t code" style="left:0;top:0"><span style="color:#008000">// <span class="jc">子供のタスクと同期</span></span></div></div>
<svg style="left:267px;top:319.5px" width="15" height="15" viewBox="0 0 15 15"><path d="M4.6 0.5 H10.4 L14.5 4.6 V10.4 L10.4 14.5 H4.6 L0.5 10.4 V4.6Z" fill="#f0603c" stroke="#d9a3a3" stroke-width="1"/><path d="M2.8 5.4 H7 V2.8 L12.4 7.5 L7 12.2 V9.6 H2.8Z" fill="#ffd92e" stroke="#6e6a2a" stroke-width="0.9"/></svg>
<div class="a" style="left:477px;top:168px;width:18px;height:232px;background:#e8e8ec"></div>
<div class="a" style="left:477px;top:169px;width:18px;height:18px;background:#e4e9f5;border:1px solid #c9d0e2"></div>
<svg style="left:480px;top:171px" width="12" height="14" viewBox="0 0 12 14" fill="none" stroke="#424242" stroke-width="1.3"><path d="M0 6 H12 M0 8 H12 M6 0.5 V4.5 M6 9.5 V13.5 M4 2.5 L6 0.5 L8 2.5 M4 11.5 L6 13.5 L8 11.5"/></svg>
<div class="a" style="left:481px;top:194px;width:0;height:0;border-left:5px solid transparent;border-right:5px solid transparent;border-bottom:5px solid #868999"></div>
<div class="a" style="left:483px;top:280px;width:8px;height:3px;background:#d4d5da"></div>
<div class="a" style="left:477px;top:285px;width:18px;height:2px;background:#0000e0"></div>
<div class="a" style="left:483px;top:283px;width:6px;height:7px;background:#9b3a3a"></div>
<div class="a" style="left:481px;top:371px;width:0;height:0;border-left:5px solid transparent;border-right:5px solid transparent;border-top:5px solid #868999"></div>
<div class="a" style="left:265px;top:383px;width:230px;height:17px;background:#e8e8ec"></div>
<div class="a" style="left:266px;top:383px;width:63px;height:17px;background:#fff;border:1px solid #c4cad8"></div>
<div class="t" style="left:268px;top:386px;font-size:12px">100 %</div>
<div class="tri" style="left:318px;top:391px;border-top-color:#1e1e1e"></div>
<div class="a" style="left:337px;top:387px;width:0;height:0;border-top:5px solid transparent;border-bottom:5px solid transparent;border-right:5px solid #868999"></div>
<div class="a" style="left:348px;top:387px;width:29px;height:9px;background:#c6c8ce"></div>
<div class="a" style="left:465px;top:387px;width:0;height:0;border-top:5px solid transparent;border-bottom:5px solid transparent;border-left:5px solid #868999"></div>
<!-- ========== DISASSEMBLY ========== -->
<div class="a" style="left:503px;top:121px;width:116px;height:24px;background:#4d6082"></div>
<div class="a" style="left:503px;top:143px;width:515px;height:2px;background:#4d6082"></div>
<div class="t tw" style="left:507px;top:127px"><span class="j" style="width:61.0px;letter-spacing:1.17px">逆アセンブル</span></div>
<svg style="left:583px;top:129px" width="11" height="9" viewBox="0 0 11 9" fill="none" stroke="#fff" stroke-width="1.2"><path d="M0.5 4.5 H4 M4 1 V8 M4 2 H10 M4 7 H10 M10 1 V8"/></svg>
<svg style="left:602px;top:129px" width="10" height="9" viewBox="0 0 10 9"><path d="M0.5 0.5 L9.5 8.5 M9.5 0.5 L0.5 8.5" stroke="#fff" stroke-width="1.3"/></svg>
<div class="a" style="left:1006px;top:132.8px;width:0;height:0;border-left:4.3px solid transparent;border-right:4.3px solid transparent;border-top:4.5px solid #d6dbe9"></div>
<div class="a" style="left:502px;top:145px;width:516px;height:257px;background:#cfd6e5;border-left:1px solid #8e9bbc;border-right:1px solid #8e9bbc;border-bottom:2px solid #8e9bbc"></div>
<div class="t" style="left:511px;top:154px;font-size:12.4px"><span class="j" style="width:37.0px;letter-spacing:-0.05px">アドレス</span>(<u>A</u>):</div>
<div class="a" style="left:575px;top:149px;width:434px;height:19px;background:#fff;border:1px solid #9aa3b8"></div>
<div class="t" style="left:578px;top:154px;font-size:12.4px">root_task</div>
<div class="tri" style="left:999px;top:159px;border-top-color:#1e1e1e"></div>
<div class="a" style="left:503px;top:171px;width:513px;height:24px;background:#cdd4e4;border-top:1px solid #e6e9f2;border-radius:0 3px 3px 0"></div>
<svg style="left:505px;top:173px" width="21" height="21" viewBox="0 0 21 21"><circle cx="10.5" cy="10.5" r="9.3" fill="#fff" stroke="#1e1e1e" stroke-width="1.3"/><path d="M6.5 9 L10.5 13 L14.5 9" fill="none" stroke="#1e1e1e" stroke-width="2"/></svg>
<div class="t" style="left:531px;top:179px;font-size:12.4px"><span class="j" style="width:71.0px;letter-spacing:0.84px">表示オプション</span></div>
<div class="a" style="left:503px;top:195px;width:20px;height:188px;background:#e6e7ed"></div>
<div class="a" style="left:523px;top:195px;width:476px;height:188px;background:#fff"></div>
<div class="a" style="left:523px;top:195px;width:476px;height:188px;overflow:hidden">
<div class="t code" style="left:0;top:0.2px;color:#8c8c8c;white-space:pre">00000000E00120C0  movk w0, #7, lsl #16</div>
<div class="t code" style="left:0;top:16.2px;color:#3c3c3c;white-space:pre">    DLY_TSK_MSEC(500);</div>
<div class="t code" style="left:0;top:32.2px;color:#8c8c8c;white-space:pre">00000000E00120C4  bl 0xe00431b0 dly_tsk</div>
<div class="t code" style="left:0;top:48.2px;color:#8c8c8c;white-space:pre">00000000E00120C8  add x0, sp, #0x104</div>
<div class="t code" style="left:0;top:64.2px;color:#3c3c3c;white-space:pre">    get_tid(&amp;tid);</div>
<div class="t code" style="left:0;top:80.2px;color:#8c8c8c;white-space:pre">00000000E00120CC  bl 0xe003e298 get_tid</div>
<div class="t code" style="left:0;top:96.2px;color:#3c3c3c;white-space:pre">    ref_tsk(tid, &amp;rtsk);</div>
<div class="t code" style="left:0;top:112.2px;color:#8c8c8c;white-space:pre">00000000E00120D0  ldr w0, [sp, #0x104]</div>
<div class="t code" style="left:0;top:128.2px;color:#8c8c8c;white-space:pre">00000000E00120D4  add x1, sp, #0x44</div>
<div class="t code" style="left:0;top:144.2px;color:#8c8c8c;white-space:pre">00000000E00120D8  bl 0xe0041cd0 ref_tsk</div>
<div class="t code" style="left:0;top:160.2px;color:#8c8c8c;white-space:pre">00000000E00120DC  add x0, sp, #0xb0</div>
<div class="t code" style="left:0;top:176.2px;color:#8c8c8c;white-space:pre">00000000E00120E0  mov w8, #7</div>
</div>
<svg style="left:505px;top:275px" width="15" height="15" viewBox="0 0 15 15"><path d="M4.6 0.5 H10.4 L14.5 4.6 V10.4 L10.4 14.5 H4.6 L0.5 10.4 V4.6Z" fill="#f0603c" stroke="#d9a3a3" stroke-width="1"/><path d="M2.8 5.4 H7 V2.8 L12.4 7.5 L7 12.2 V9.6 H2.8Z" fill="#ffd92e" stroke="#6e6a2a" stroke-width="0.9"/></svg>
<div class="a" style="left:999px;top:195px;width:18px;height:206px;background:#e8e8ec"></div>
<div class="a" style="left:1003px;top:203px;width:0;height:0;border-left:5px solid transparent;border-right:5px solid transparent;border-bottom:5px solid #868999"></div>
<div class="a" style="left:1003px;top:269px;width:9px;height:27px;background:#c6c8ce"></div>
<div class="a" style="left:1003px;top:371px;width:0;height:0;border-left:5px solid transparent;border-right:5px solid transparent;border-top:5px solid #868999"></div>
<div class="a" style="left:503px;top:383px;width:514px;height:18px;background:#e8e8ec"></div>
<div class="a" style="left:510px;top:387px;width:0;height:0;border-top:5px solid transparent;border-bottom:5px solid transparent;border-right:5px solid #868999"></div>
<div class="a" style="left:522px;top:387px;width:203px;height:9px;background:#c6c8ce"></div>
<div class="a" style="left:988px;top:387px;width:0;height:0;border-top:5px solid transparent;border-bottom:5px solid transparent;border-left:5px solid #868999"></div>
<!-- ========== LOCALS ========== -->
<div class="a" style="left:264px;top:409px;width:754px;height:98px;background:#fff;border:1px solid #8e9bbc;border-top-color:#9aa7c4;border-bottom-width:1px"></div>
<div class="a" style="left:265px;top:410px;width:752px;height:24px;background:#4d6082"></div>
<div class="t tw" style="left:270px;top:416px"><span class="j" style="width:36.0px;letter-spacing:0.00px">ローカル</span></div>
<div class="dd" style="left:962px;top:421px"></div>
<svg style="left:982px;top:416px" width="9" height="12" viewBox="0 0 9 12"><path d="M1.5 0.5 H7.5 M2.5 0.5 V6.5 M6.5 0.5 V6.5 M0.5 6.5 H8.5 M4.5 6.5 V11.5" stroke="#fff" stroke-width="1.3" fill="none"/></svg>
<svg style="left:999px;top:417px" width="11" height="10" viewBox="0 0 11 10"><path d="M0.5 0.5 L10.5 9.5 M10.5 0.5 L0.5 9.5" stroke="#fff" stroke-width="1.3"/></svg>
<div class="a" style="left:265px;top:434px;width:735px;height:21px;background:#fff;border-bottom:1px solid #d5d8e2"></div>
<div class="a" style="left:274px;top:434px;width:1px;height:21px;background:#e4e6ec"></div>
<div class="a" style="left:494px;top:434px;width:1px;height:21px;background:#e4e6ec"></div>
<div class="a" style="left:944px;top:434px;width:1px;height:21px;background:#e4e6ec"></div>
<div class="t" style="left:279px;top:440px;font-size:12px"><span class="j" style="width:24.0px;letter-spacing:3.00px">名前</span></div>
<div class="t" style="left:498px;top:440px;font-size:12px"><span class="j" style="width:13.0px;letter-spacing:4.00px">値</span></div>
<div class="t" style="left:948px;top:440px;font-size:12px"><span class="j" style="width:13.0px;letter-spacing:4.00px">型</span></div>
<div class="a" style="left:265px;top:456px;width:735px;height:50px;overflow:hidden">
<div class="a" style="left:9px;top:18.3px;width:726px;height:1px;background:#f0f0f2"></div>
<svg style="left:30px;top:4.0px" width="11" height="10" viewBox="0 0 11 10"><path d="M0.5 3.5 L6 0.5 L10.5 2.5 V6.5 L5 9.5 L0.5 7.5Z" fill="#005dba"/><path d="M2 3.6 L6 1.6 L8.6 2.8 L4.6 4.8Z" fill="#fff"/></svg>
<div class="t" style="left:48px;top:4.3px;font-size:12px">exinf</div>
<div class="t" style="left:233px;top:4.3px;font-size:12.1px">1 (0x1)</div>
<div class="t" style="left:683px;top:4.3px;font-size:12px">int64</div>
<div class="a" style="left:9px;top:37.6px;width:726px;height:1px;background:#f0f0f2"></div>
<svg style="left:30px;top:23.3px" width="11" height="10" viewBox="0 0 11 10"><path d="M0.5 3.5 L6 0.5 L10.5 2.5 V6.5 L5 9.5 L0.5 7.5Z" fill="#005dba"/><path d="M2 3.6 L6 1.6 L8.6 2.8 L4.6 4.8Z" fill="#fff"/></svg>
<div class="t" style="left:48px;top:23.6px;font-size:12px">tid</div>
<div class="t" style="left:233px;top:23.6px;font-size:12.1px">1263225675 (0x4B4B4B4B)</div>
<div class="t" style="left:683px;top:23.6px;font-size:12px">int</div>
<svg style="left:30px;top:42.6px" width="11" height="10" viewBox="0 0 11 10"><path d="M0.5 3.5 L6 0.5 L10.5 2.5 V6.5 L5 9.5 L0.5 7.5Z" fill="#005dba"/><path d="M2 3.6 L6 1.6 L8.6 2.8 L4.6 4.8Z" fill="#fff"/></svg>
<div class="t" style="left:48px;top:42.9px;font-size:12px">ercd</div>
<div class="t" style="left:233px;top:42.9px;font-size:12.1px">1263225675 (0x4B4B4B4B)</div>
<div class="t" style="left:683px;top:42.9px;font-size:12px">int</div>
</div>
<div class="a" style="left:999px;top:434px;width:18px;height:72px;background:#e8e8ec"></div>
<div class="a" style="left:1004px;top:442px;width:0;height:0;border-left:5px solid transparent;border-right:5px solid transparent;border-bottom:5px solid #868999"></div>
<div class="a" style="left:1004px;top:453px;width:9px;height:19px;background:#c6c8ce"></div>
<div class="a" style="left:1004px;top:494px;width:0;height:0;border-left:5px solid transparent;border-right:5px solid transparent;border-top:5px solid #868999"></div>
<!-- ========== RTOS VIEWER ========== -->
<div class="a" style="left:264px;top:514px;width:316px;height:125px;background:#fff;border:1px solid #8e9bbc;border-top-color:#9aa7c4"></div>
<div class="a" style="left:265px;top:515px;width:314px;height:24px;background:#4d6082"></div>
<div class="t tw" style="left:270px;top:521px">RTOS <span class="j" style="width:43.5px;letter-spacing:-0.30px">ビューアー</span></div>
<div class="dd" style="left:525px;top:526px"></div>
<svg style="left:544px;top:521px" width="9" height="12" viewBox="0 0 9 12"><path d="M1.5 0.5 H7.5 M2.5 0.5 V6.5 M6.5 0.5 V6.5 M0.5 6.5 H8.5 M4.5 6.5 V11.5" stroke="#fff" stroke-width="1.3" fill="none"/></svg>
<svg style="left:560.5px;top:522px" width="11" height="10" viewBox="0 0 11 10"><path d="M0.5 0.5 L10.5 9.5 M10.5 0.5 L0.5 9.5" stroke="#fff" stroke-width="1.3"/></svg>
<div class="a" style="left:265px;top:539px;width:314px;height:28px;background:#cfd6e5"></div>
<div class="t" style="left:273px;top:548px;font-size:11.7px">RTOS :</div>
<div class="combo" style="left:321px;top:543px;width:106px;height:21px"></div>
<div class="t" style="left:325px;top:548.5px;font-size:11.4px;width:85.5px;overflow:hidden">TOPPERS_FMP3</div>
<div class="tri" style="left:417px;top:553px;border-top-color:#1e1e1e"></div>
<svg style="left:435px;top:546px" width="15" height="14" viewBox="0 0 15 14" fill="none" stroke="#424242" stroke-width="2"><path d="M3 10 Q0 6 3 3 Q5.5 1 8 1.5"/><path d="M12 4 Q15 8 12 11 Q9.5 13 7 12.5"/><path d="M6 0 L9 1.5 L7 4.5 M9 14 L6 12.5 L8 9.5" stroke-width="1.6"/></svg>
<svg style="left:458px;top:546px" width="16" height="16" viewBox="0 0 16 16"><g fill="#555"><circle cx="8" cy="8" r="5"/><rect x="6.8" y="0.5" width="2.4" height="15"/><rect x="0.5" y="6.8" width="15" height="2.4"/><rect x="6.8" y="0.5" width="2.4" height="15" transform="rotate(45 8 8)"/><rect x="6.8" y="0.5" width="2.4" height="15" transform="rotate(-45 8 8)"/></g><circle cx="8" cy="8" r="3.6" fill="#cfd6e5"/><circle cx="8" cy="8" r="1.8" fill="#555"/></svg>
<div class="a" style="left:265px;top:567px;width:142px;height:71px;background:#fff"></div>
<div class="a" style="left:267px;top:569px;width:139px;height:20px;background:#0078d7"></div>
<div class="t" style="left:272px;top:573px;color:#fff;font-size:12.4px"><span class="j" style="width:29.0px;letter-spacing:0.37px">タスク</span></div>
<div class="t" style="left:272px;top:595px;font-size:12.4px"><span class="j" style="width:63.0px;letter-spacing:-0.30px">イベントフラグ</span></div>
<div class="t" style="left:272px;top:617px;font-size:12.4px"><span class="j" style="width:37.0px;letter-spacing:-0.05px">セマフォ</span></div>
<div class="a" style="left:407px;top:567px;width:17px;height:71px;background:#e8e8ec"></div>
<div class="a" style="left:410px;top:574px;width:0;height:0;border-left:5px solid transparent;border-right:5px solid transparent;border-bottom:5px solid #868999"></div>
<div class="a" style="left:410px;top:587px;width:10px;height:8px;background:#c6c8ce"></div>
<div class="a" style="left:410px;top:625px;width:0;height:0;border-left:5px solid transparent;border-right:5px solid transparent;border-top:5px solid #868999"></div>
<div class="a" style="left:424px;top:567px;width:8px;height:71px;background:#fff"></div>
<div class="a" style="left:427px;top:576px;width:1.5px;height:53px;background:#333"></div>
<div class="a" style="left:430px;top:576px;width:1.5px;height:53px;background:#333"></div>
<div class="a" style="left:432px;top:567px;width:147px;height:71px;background:#fff;border-left:1px solid #e0e0e0"></div>
<div class="a" style="left:433px;top:567px;width:146px;height:27px;background:#f0f0f0;border-bottom:1px solid #dadada"></div>
<div class="a" style="left:433px;top:594px;width:30px;height:23px;background:#f0f0f0;border-bottom:1px solid #dadada"></div>
<div class="a" style="left:463px;top:567px;width:1px;height:50px;background:#dadada"></div>
<div class="a" style="left:505px;top:567px;width:1px;height:50px;background:#dadada"></div>
<div class="a" style="left:561px;top:567px;width:1px;height:50px;background:#dadada"></div>
<div class="a" style="left:464px;top:616px;width:115px;height:1px;background:#e4e4e4"></div>
<div class="a" style="left:452px;top:582px;width:0;height:0;border-left:9px solid transparent;border-bottom:9px solid #dcdcdc"></div>
<div class="t" style="left:469px;top:575px;font-size:12.6px">Id</div>
<div class="t" style="left:512px;top:575px;font-size:12.6px">Core</div>
<div class="t" style="left:568px;top:575px;font-size:12.6px;width:11px;overflow:hidden">State</div>
<svg style="left:439px;top:597.5px" width="15" height="15" viewBox="0 0 15 15"><circle cx="7.5" cy="7.5" r="7.5" fill="#339933"/><path d="M5.3 3.6 L11.6 7.5 L5.3 11.4Z" fill="#fff"/></svg>
<div class="t" style="left:493px;top:600px;font-size:12.4px;color:#1e1e1e">1</div>
<div class="t code" style="left:550px;top:600px;color:#e51400">0</div>
<div class="t code" style="left:566px;top:600px;color:#e51400;width:13px;overflow:hidden">Running</div>
<div class="a" style="left:464px;top:621px;width:115px;height:17px;background:#e8e8ec"></div>
<div class="a" style="left:470px;top:624px;width:0;height:0;border-top:5px solid transparent;border-bottom:5px solid transparent;border-right:5px solid #868999"></div>
<div class="a" style="left:482px;top:625px;width:11px;height:9px;background:#c6c8ce"></div>
<!-- ========== PARALLEL STACK ========== -->
<div class="a" style="left:587px;top:514px;width:233px;height:125px;background:#fff;border:1px solid #8e9bbc;border-top-color:#9aa7c4"></div>
<div class="a" style="left:588px;top:515px;width:231px;height:24px;background:#4d6082"></div>
<div class="t tw" style="left:593px;top:521px"><span class="j" style="width:62.7px;letter-spacing:1.45px">並列スタック</span></div>
<div class="dd" style="left:765px;top:526px"></div>
<svg style="left:784px;top:521px" width="9" height="12" viewBox="0 0 9 12"><path d="M1.5 0.5 H7.5 M2.5 0.5 V6.5 M6.5 0.5 V6.5 M0.5 6.5 H8.5 M4.5 6.5 V11.5" stroke="#fff" stroke-width="1.3" fill="none"/></svg>
<svg style="left:800.5px;top:522px" width="11" height="10" viewBox="0 0 11 10"><path d="M0.5 0.5 L10.5 9.5 M10.5 0.5 L0.5 9.5" stroke="#fff" stroke-width="1.3"/></svg>
<div class="a" style="left:588px;top:539px;width:231px;height:28px;background:#cfd6e5"></div>
<div class="combo" style="left:595px;top:543px;width:85px;height:21px"></div>
<div class="t" style="left:599px;top:548px;font-size:12.4px"><span class="j" style="width:37.0px;letter-spacing:-0.05px">スレッド</span></div>
<div class="tri" style="left:672px;top:553px;border-top-color:#1e1e1e"></div>
<svg style="left:688px;top:546px" width="16" height="15" viewBox="0 0 16 15" fill="#b3b8c4"><path d="M0 3 H11 L7 8 L6 14 L5 8Z"/><path d="M4 0 H16 M7 2 H14" stroke="#b3b8c4" stroke-width="1.3"/></svg>
<div class="sep" style="left:711px;top:545px;height:18px"></div>
<svg style="left:721px;top:546px" width="16" height="15" viewBox="0 0 16 15" fill="none" stroke="#424242" stroke-width="1.4"><rect x="0.7" y="0.7" width="14.6" height="13.6"/><path d="M0.7 3.5 H15.3" stroke-width="2.2"/><circle cx="4.5" cy="10" r="2.6"/><path d="M4.5 8.5 V11"/></svg>
<div class="sep" style="left:743px;top:545px;height:18px"></div>
<div class="a" style="left:750px;top:541px;width:23px;height:23px;background:#fff3c4;border:1px solid #e5c365"></div>
<div class="a" style="left:773px;top:541px;width:23px;height:23px;background:#fff3c4;border:1px solid #e5c365"></div>
<svg style="left:753px;top:544px" width="17" height="17" viewBox="0 0 17 17" fill="none" stroke="#424242" stroke-width="1.3"><path d="M1 1 V7" stroke="#1e6fc7" stroke-width="1.6"/><path d="M3 1 L7 4 L3 7Z" fill="#1e6fc7" stroke="none"/><rect x="9.5" y="1.5" width="6" height="5"/><rect x="1.5" y="10" width="6" height="6"/><path d="M12.5 6.5 V8.5 H4.5 V10"/></svg>
<svg style="left:776px;top:544px" width="17" height="17" viewBox="0 0 17 17" fill="none" stroke="#424242" stroke-width="1.3"><circle cx="5.5" cy="8.5" r="4"/><path d="M3.5 8.5 H7.5 M5.5 6.5 V10.5"/><rect x="10.5" y="1" width="5" height="15"/><path d="M13 4 V13" /><rect x="12" y="7" width="2" height="3" fill="#424242"/></svg>
<div class="a" style="left:588px;top:567px;width:214px;height:55px;background:#fff;overflow:hidden">
<div class="t" style="left:10px;top:6px;font-size:7px;color:#e0a0a0">100%</div>
<div class="a" style="left:4px;top:18px;width:28px;height:1px;background:#e4e4e4"></div>
<div class="a" style="left:12px;top:23px;width:2px;height:40px;background:#ececec"></div>
<div class="a" style="left:25px;top:26px;width:4px;height:1px;background:#e0e0e0"></div>
<div class="a" style="left:25px;top:31px;width:4px;height:1px;background:#e0e0e0"></div>
<div class="a" style="left:25px;top:36px;width:4px;height:1px;background:#e0e0e0"></div>
<div class="a" style="left:25px;top:41px;width:4px;height:1px;background:#e0e0e0"></div>
<div class="a" style="left:25px;top:46px;width:4px;height:1px;background:#e0e0e0"></div>
<div class="a" style="left:45px;top:-20px;width:98px;height:62px;border:3px solid #0e70c0;border-radius:5px;background:#fff;overflow:hidden">
<div class="a" style="left:0;top:17px;width:92px;height:15px;background:linear-gradient(90deg,#c9def3,#f6f9fd);border-bottom:1px solid #cfd6df"></div>
<div class="t" style="left:21px;top:18px;font-size:12.4px;color:#1e1e1e">1 <span class="j" style="width:37.0px;letter-spacing:-0.05px">スレッド</span></div>
<div class="a" style="left:24px;top:33px;width:1px;height:24px;background:#e4e4e4"></div>
<div class="t" style="left:28px;top:40px;font-size:13px;font-weight:bold;color:#000">root_task</div>
</div>
<svg style="left:57px;top:21px" width="12" height="11" viewBox="0 0 12 11"><path d="M0.6 3.5 H5.5 V0.8 L11.2 5.5 L5.5 10.2 V7.5 H0.6Z" fill="#ffd700" stroke="#6b5a1e" stroke-width="1"/></svg>
<div class="a" style="left:154px;top:0;width:1.5px;height:36px;background:#7a7a7a"></div>
<div class="a" style="left:156px;top:0;width:58px;height:15px;background:#c9def3"></div>
<svg style="left:162px;top:19px" width="16" height="16" viewBox="0 0 16 16" fill="none" stroke="#424242" stroke-width="1.4"><path d="M1 8 Q3 1 7 5 Q11 9 14 2"/><path d="M2 1 L13 10"/><path d="M3 10 V15 M0.5 12.5 H5.5" stroke-width="1.6"/></svg>
<div class="a" style="left:179px;top:17px;width:1px;height:20px;background:#e4e4e4"></div>
<div class="t" style="left:183px;top:23px;font-size:13px;color:#1e1e1e">_kernel</div>
</div>
<div class="a" style="left:802px;top:567px;width:17px;height:56px;background:#e8e8ec"></div>
<div class="a" style="left:805px;top:573px;width:0;height:0;border-left:5px solid transparent;border-right:5px solid transparent;border-bottom:5px solid #868999"></div>
<div class="a" style="left:805px;top:589px;width:9px;height:12px;background:#c6c8ce"></div>
<div class="a" style="left:805px;top:607px;width:0;height:0;border-left:5px solid transparent;border-right:5px solid transparent;border-top:5px solid #868999"></div>
<div class="a" style="left:588px;top:622px;width:215px;height:16px;background:#e8e8ec"></div>
<div class="a" style="left:595px;top:624px;width:0;height:0;border-top:5px solid transparent;border-bottom:5px solid transparent;border-right:5px solid #868999"></div>
<div class="a" style="left:607px;top:624px;width:106px;height:9px;background:#c6c8ce"></div>
<div class="a" style="left:789px;top:624px;width:0;height:0;border-top:5px solid transparent;border-bottom:5px solid transparent;border-left:5px solid #868999"></div>
<div class="a" style="left:803.5px;top:623px;width:15px;height:15px;background:#d5e6f7;border:1px solid #7fb0e0"></div>
<div class="a" style="left:807px;top:626px;width:8px;height:10px;border:1px solid #424242;border-top-width:2.2px;background:#f4f4f4"></div>
<div class="a" style="left:732px;top:604px;width:71px;height:19px;background:#fff;border:1.5px solid #555"></div>
<div class="a" style="left:733.5px;top:605.5px;width:44px;height:16px;background:#b5d4f0"></div>
<div class="a" style="left:740px;top:606.5px;width:20.5px;height:13px;border:1.5px solid #3b8ee0;border-radius:2px;background:#cfe3f6"></div>
<div class="a" style="left:742px;top:612px;width:17px;height:1px;background:#9cbfe0"></div>
<div class="a" style="left:743px;top:614px;width:2px;height:2px;background:#c8b400"></div>
<div class="a" style="left:747px;top:614.5px;width:10px;height:2px;background:#333"></div>
<div class="a" style="left:763px;top:606.5px;width:38px;height:13px;border:1px solid #9cbfe0;background:linear-gradient(90deg,#a9cdef 0,#a9cdef 38%,#fff 39%)"></div>
<div class="a" style="left:764px;top:607.5px;width:36px;height:4px;background:linear-gradient(90deg,#8fbde9,#e8f2fb)"></div>
<div class="a" style="left:770px;top:614.5px;width:29px;height:1.5px;background:#777"></div>
<!-- ========== CALL STACK ========== -->
<div class="a" style="left:828px;top:514px;width:190px;height:125px;background:#fff;border:1px solid #8e9bbc;border-top-color:#9aa7c4"></div>
<div class="a" style="left:829px;top:515px;width:188px;height:24px;background:#4d6082"></div>
<div class="t tw" style="left:834px;top:521px"><span class="j" style="width:70.0px;letter-spacing:2.67px">呼び出し履歴</span></div>
<div class="dd" style="left:963px;top:526px"></div>
<svg style="left:982px;top:521px" width="9" height="12" viewBox="0 0 9 12"><path d="M1.5 0.5 H7.5 M2.5 0.5 V6.5 M6.5 0.5 V6.5 M0.5 6.5 H8.5 M4.5 6.5 V11.5" stroke="#fff" stroke-width="1.3" fill="none"/></svg>
<svg style="left:998.5px;top:522px" width="11" height="10" viewBox="0 0 11 10"><path d="M0.5 0.5 L10.5 9.5 M10.5 0.5 L0.5 9.5" stroke="#fff" stroke-width="1.3"/></svg>
<div class="a" style="left:829px;top:539px;width:170px;height:22px;background:#fff;border-bottom:1px solid #e0e3ea"></div>
<div class="a" style="left:846px;top:539px;width:1px;height:40px;background:#e4e6ec"></div>
<div class="a" style="left:966px;top:539px;width:1px;height:40px;background:#e4e6ec"></div>
<div class="t" style="left:850px;top:544px;font-size:12px"><span class="j" style="width:24.0px;letter-spacing:3.00px">名前</span></div>
<div class="t" style="left:972px;top:544px;font-size:12px;width:26px;overflow:hidden"><span class="j" style="width:23.5px;letter-spacing:2.75px">言語</span></div>
<div class="a" style="left:829px;top:578px;width:170px;height:1px;background:#eceef2"></div>
<svg style="left:830px;top:563px" width="15" height="15" viewBox="0 0 15 15"><circle cx="7.5" cy="7.5" r="7" fill="#e51400"/><path d="M3 6 H7 V3.2 L12 7.5 L7 11.8 V9 H3Z" fill="#ffd700" stroke="#6b5a1e" stroke-width="0.7"/></svg>
<div class="t" style="left:849px;top:564px;font-size:12.4px;width:117px;overflow:hidden">test-stack-usage-recog.out!root_task</div>
<div class="t" style="left:970px;top:564px;font-size:12.4px;width:29px;overflow:hidden">C/C++</div>
<div class="a" style="left:999px;top:539px;width:18px;height:99px;background:#e8e8ec"></div>
<div class="a" style="left:1003px;top:546px;width:0;height:0;border-left:5px solid transparent;border-right:5px solid transparent;border-bottom:5px solid #c9cad2"></div>
<div class="a" style="left:1003px;top:627px;width:0;height:0;border-left:5px solid transparent;border-right:5px solid transparent;border-top:5px solid #c9cad2"></div>
<!-- STATUS BAR -->
<div class="a" style="left:0;top:646px;width:1024px;height:26px;background:#ca5100"></div>
<div class="t ts" style="left:5px;top:653px"><span class="j" style="width:48.0px;letter-spacing:3.00px">準備完了</span></div>
<div class="t ts" style="left:627px;top:653px">109 <span class="j" style="width:13.0px;letter-spacing:4.00px">行</span></div>
<div class="t ts" style="left:724px;top:653px">1 <span class="j" style="width:13.0px;letter-spacing:4.00px">列</span></div>
<div class="t ts" style="left:823px;top:653px">1 <span class="j" style="width:26.0px;letter-spacing:4.00px">文字</span></div>
<div class="t ts" style="left:968px;top:653px"><span class="j" style="width:26.0px;letter-spacing:4.00px">挿入</span></div>
<svg style="left:1010px;top:659px" width="10" height="10" viewBox="0 0 10 10" fill="#f0c8a8"><rect x="8" y="0" width="2" height="2"/><rect x="5" y="3" width="2" height="2"/><rect x="8" y="3" width="2" height="2"/><rect x="2" y="6" width="2" height="2"/><rect x="5" y="6" width="2" height="2"/><rect x="8" y="6" width="2" height="2"/><rect x="0" y="8.5" width="10" height="1.5"/></svg>
</body></html>
